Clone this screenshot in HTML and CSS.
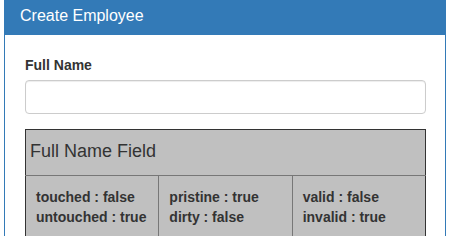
FILE: index.html
```html
<!DOCTYPE html>
<html lang="en">
<head>
    <meta charset="UTF-8">
    <meta name="viewport" content="width=device-width, initial-scale=1.0">
    <title>Create Employee</title>
    <link rel="stylesheet" href="styles.css">
</head>
<body>

<div class="panel">
    <div class="panel-heading">
        <h3 class="panel-title">Create Employee</h3>
    </div>
    <div class="panel-body">
        <div class="form-group">
            <label for="fullName">Full Name</label>
            <input type="text" id="fullName" class="form-control">
        </div>

        <table class="state-table">
            <tr>
                <th colspan="3">Full Name Field</th>
            </tr>
            <tr>
                <td>touched : false<br>untouched : true</td>
                <td>pristine : true<br>dirty : false</td>
                <td>valid : false<br>invalid : true</td>
            </tr>
        </table>
    </div>
</div>

</body>
</html>
```

FILE: styles.css
```css
html {
    overflow: hidden;
}
body {
    margin: 0;
    font-family: "Liberation Sans", Arial, sans-serif;
    font-size: 14px;
    line-height: 20px;
    color: #333;
    background-color: #fff;
}
.panel {
    width: 442px;
    margin-left: 4px;
    box-sizing: border-box;
    border: 1px solid #337ab7;
    border-top: none;
}
.panel-heading {
    height: 35px;
    box-sizing: border-box;
    padding: 7px 15px 10px;
    background-color: #337ab7;
    color: #fff;
}
.panel-title {
    margin: 0;
    font-size: 16px;
    font-weight: normal;
    line-height: 18px;
}
.panel-body {
    padding: 20px 19px 0 20px;
}
.form-group {
    margin-bottom: 15px;
}
label {
    display: block;
    margin-bottom: 5px;
    font-weight: bold;
}
.form-control {
    display: block;
    width: 100%;
    height: 34px;
    box-sizing: border-box;
    padding: 6px 12px;
    margin: 0;
    font-family: inherit;
    font-size: 14px;
    color: #555;
    background-color: #fff;
    border: 1px solid #ccc;
    border-radius: 4px;
    box-shadow: inset 0 1px 1px rgba(0, 0, 0, 0.075);
}
.state-table {
    width: 100%;
    table-layout: fixed;
    border-collapse: collapse;
    background-color: #c0c0c0;
    border: 1px solid #333;
}
.state-table th {
    padding: 11px 4px 14px;
    font-size: 18px;
    font-weight: normal;
    line-height: 20px;
    text-align: left;
    border-bottom: 1px solid #777;
}
.state-table td {
    padding: 11px 10px;
    font-weight: bold;
    vertical-align: top;
    border-left: 1px solid #777;
}
.state-table td:first-child {
    border-left: none;
}
```
